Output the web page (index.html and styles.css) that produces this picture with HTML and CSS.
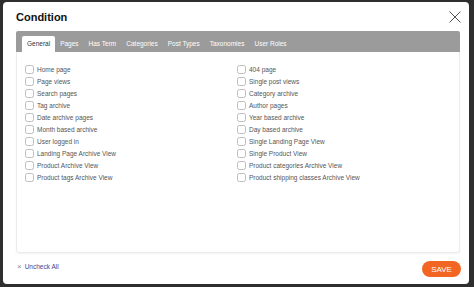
FILE: index.html
```html
<!DOCTYPE html>
<html>
<head>
<meta charset="utf-8">
<link rel="stylesheet" href="styles.css">
</head>
<body>
<div class="modal">
  <div class="header">
    <h1 class="title">Condition</h1>
    <button class="close" aria-label="Close">
      <svg width="12" height="12" viewBox="0 0 12 12"><path d="M0.5 0.5 L11.5 11.5 M11.5 0.5 L0.5 11.5" stroke="#555" stroke-width="1" fill="none"/></svg>
    </button>
  </div>
  <div class="tabs">
    <span class="tab active">General</span>
    <span class="tab">Pages</span>
    <span class="tab">Has Term</span>
    <span class="tab">Categories</span>
    <span class="tab">Post Types</span>
    <span class="tab">Taxonomies</span>
    <span class="tab">User Roles</span>
  </div>
  <div class="panel">
    <div class="grid">
      <label class="item"><span class="box"></span>Home page</label>
      <label class="item"><span class="box"></span>404 page</label>
      <label class="item"><span class="box"></span>Page views</label>
      <label class="item"><span class="box"></span>Single post views</label>
      <label class="item"><span class="box"></span>Search pages</label>
      <label class="item"><span class="box"></span>Category archive</label>
      <label class="item"><span class="box"></span>Tag archive</label>
      <label class="item"><span class="box"></span>Author pages</label>
      <label class="item"><span class="box"></span>Date archive pages</label>
      <label class="item"><span class="box"></span>Year based archive</label>
      <label class="item"><span class="box"></span>Month based archive</label>
      <label class="item"><span class="box"></span>Day based archive</label>
      <label class="item"><span class="box"></span>User logged in</label>
      <label class="item"><span class="box"></span>Single Landing Page View</label>
      <label class="item"><span class="box"></span>Landing Page Archive View</label>
      <label class="item"><span class="box"></span>Single Product View</label>
      <label class="item"><span class="box"></span>Product Archive View</label>
      <label class="item"><span class="box"></span>Product categories Archive View</label>
      <label class="item"><span class="box"></span>Product tags Archive View</label>
      <label class="item"><span class="box"></span>Product shipping classes Archive View</label>
    </div>
  </div>
  <div class="footer">
    <a class="uncheck"><span class="x">×</span>Uncheck All</a>
    <button class="save">SAVE</button>
  </div>
</div>
</body>
</html>
```
FILE: styles.css
```css
html, body {
  margin: 0;
  padding: 0;
  background: #2e2e2e;
  height: 287px;
  overflow: hidden;
  font-family: "Liberation Sans", Arial, sans-serif;
}
.modal {
  margin: 2px 5px 0 3px;
  height: 282px;
  box-sizing: border-box;
  background: #fff;
  border-radius: 4px;
  padding: 0 9px 0 13px;
  display: flex;
  flex-direction: column;
}
.header {
  height: 29px;
  display: flex;
  justify-content: space-between;
  align-items: flex-start;
}
.title {
  margin: 8px 0 0 0;
  font-size: 11px;
  line-height: 14px;
  font-weight: bold;
  color: #111;
}
.close {
  margin: 9px -1px 0 0;
  padding: 0;
  border: 0;
  background: none;
  width: 12px;
  height: 12px;
  display: flex;
}
.tabs {
  height: 21px;
  background: #9b9b9b;
  border-radius: 2px 2px 0 0;
  display: flex;
  align-items: flex-end;
  padding-left: 6px;
}
.tab {
  height: 16px;
  padding: 0 5px 0 5px;
  font-size: 6.5px;
  line-height: 16px;
  color: #fff;
  border-radius: 2px 2px 0 0;
}
.tab.active {
  background: #fff;
  color: #333;
}
.panel {
  height: 201px;
  box-sizing: border-box;
  border: 1px solid #ececec;
  border-top: 0;
  border-radius: 0 0 3px 3px;
  box-shadow: 0 1px 2px rgba(0,0,0,0.05);
  padding: 11px 0 0 8px;
}
.grid {
  display: grid;
  grid-template-columns: 212px 1fr;
  grid-auto-rows: 12px;
}
.item {
  display: flex;
  align-items: center;
  font-size: 6.5px;
  color: #555;
  white-space: nowrap;
}
.box {
  width: 9px;
  height: 9px;
  box-sizing: border-box;
  border: 1px solid #bdbdbd;
  border-radius: 2.5px;
  margin-right: 3px;
  flex: none;
}
.footer {
  display: flex;
  justify-content: space-between;
  align-items: flex-start;
  padding-top: 8px;
}
.uncheck {
  margin-top: 1px;
  margin-left: 1px;
  font-size: 6.5px;
  color: #4a3f8c;
  display: flex;
  align-items: center;
}
.uncheck .x {
  color: #888;
  font-size: 8px;
  margin-right: 3px;
}
.save {
  width: 39px;
  height: 16px;
  border: 0;
  border-radius: 8px;
  background: #f26522;
  color: #fff;
  font-family: "Liberation Sans", Arial, sans-serif;
  font-size: 8px;
  padding: 0;
  margin-right: -1px;
}
```
